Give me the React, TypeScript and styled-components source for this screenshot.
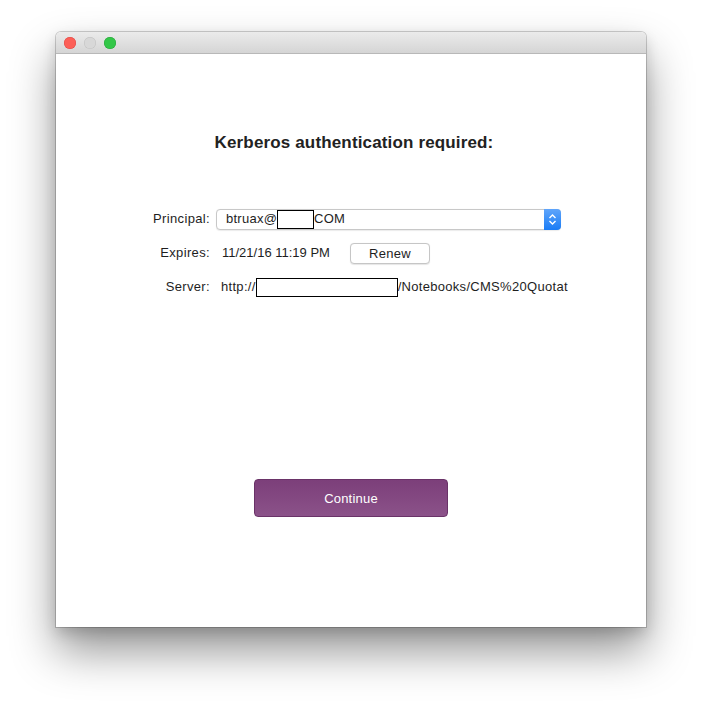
import React from "react";
import styled, { createGlobalStyle } from "styled-components";

const Global = createGlobalStyle`
  html, body { margin: 0; padding: 0; background: #ffffff; }
  body { font-family: "Liberation Sans", Arial, sans-serif; }
`;

const Page = styled.div`
  width: 702px;
  height: 707px;
  padding: 32px 0 0 56px;
  box-sizing: border-box;
  overflow: hidden;
`;

const Window = styled.div`
  width: 590px;
  height: 595px;
  background: #fff;
  border-radius: 5px 5px 0 0;
  box-shadow: 0 0 0 1px rgba(0,0,0,0.18), 0 24px 45px rgba(0,0,0,0.42), 0 6px 14px rgba(0,0,0,0.15);
  display: flex;
  flex-direction: column;
`;

const TitleBar = styled.div`
  height: 22px;
  flex: none;
  border-radius: 5px 5px 0 0;
  background: linear-gradient(#ebebeb, #d5d5d5);
  border-bottom: 1px solid #b8b8b8;
  box-sizing: border-box;
  display: flex;
  align-items: center;
  gap: 8px;
  padding-left: 8px;
`;

const Light = styled.span<{ $c: string; $b: string }>`
  width: 12px;
  height: 12px;
  border-radius: 50%;
  background: ${(p) => p.$c};
  box-shadow: inset 0 0 0 0.5px ${(p) => p.$b};
`;

const Body = styled.div`
  flex: 1;
  display: flex;
  flex-direction: column;
  align-items: stretch;
`;

const Title = styled.h1`
  margin: 79px 0 0 0;
  padding-left: 6px;
  font-size: 17px;
  font-weight: bold;
  color: #222;
  text-align: center;
  line-height: 20px;
  letter-spacing: 0.15px;
`;

const Form = styled.div`
  margin: 55px 0 0 90px;
  display: grid;
  grid-template-columns: 64px auto;
  column-gap: 6px;
  row-gap: 12px;
  align-items: center;
  font-size: 13px;
  color: #1e1e1e;
`;

const Label = styled.div`
  text-align: right;
  line-height: 22px;
  letter-spacing: 0.35px;
  white-space: nowrap;
`;

const Value = styled.div<{ $indent?: number; $ls?: number }>`
  display: flex;
  align-items: center;
  padding-left: ${(p) => p.$indent ?? 0}px;
  line-height: 22px;
  white-space: nowrap;
  letter-spacing: ${(p) => p.$ls ?? 0}px;
`;

const Popup = styled.div`
  width: 345px;
  height: 21px;
  box-sizing: border-box;
  border: 1px solid #c8c8c8;
  border-radius: 4px;
  background: #fff;
  display: flex;
  align-items: center;
  padding-left: 9px;
  position: relative;
  box-shadow: 0 0.5px 1px rgba(0,0,0,0.08);
`;

const Stepper = styled.div`
  position: absolute;
  right: -1px;
  top: -1px;
  width: 17px;
  height: 21px;
  border-radius: 0 4px 4px 0;
  background: linear-gradient(#5fa5fb, #1a7cf5);
  display: flex;
  align-items: center;
  justify-content: center;
`;

const Redact = styled.span<{ $w: number }>`
  display: inline-block;
  width: ${(p) => p.$w}px;
  height: 19px;
  box-sizing: border-box;
  border: 1px solid #000;
  background: #fff;
`;

const Button = styled.button`
  margin-left: 20px;
  width: 80px;
  height: 21px;
  box-sizing: border-box;
  border: 1px solid #c6c6c6;
  border-radius: 4px;
  background: #fff;
  font-family: inherit;
  font-size: 13px;
  letter-spacing: 0.3px;
  color: #1e1e1e;
  padding: 0;
  box-shadow: 0 0.5px 1px rgba(0,0,0,0.1);
`;

const Continue = styled.button`
  margin: 181px 0 0 198px;
  width: 194px;
  height: 38px;
  border: 1px solid #6a3368;
  border-radius: 4px;
  background: linear-gradient(#7c3f7a, #8b5289);
  color: #fff;
  font-family: inherit;
  font-size: 13px;
  letter-spacing: 0.2px;
  padding: 0;
`;

export default function App() {
  return (
    <>
      <Global />
      <Page>
        <Window>
          <TitleBar>
            <Light $c="#fc5f57" $b="#df4744" />
            <Light $c="#d8d8d8" $b="#c0c0c0" />
            <Light $c="#33c748" $b="#27a33a" />
          </TitleBar>
          <Body>
            <Title>Kerberos authentication required:</Title>
            <Form>
              <Label>Principal:</Label>
              <Value $ls={0.25}>
                <Popup>
                  btruax@<Redact $w={37} />COM
                  <Stepper>
                    <svg width="9" height="13" viewBox="0 0 9 13">
                      <path d="M1.5 5 L4.5 2 L7.5 5 M1.5 8 L4.5 11 L7.5 8" fill="none" stroke="#fff" strokeWidth="1.4" />
                    </svg>
                  </Stepper>
                </Popup>
              </Value>
              <Label>Expires:</Label>
              <Value $indent={6}>
                11/21/16 11:19 PM
                <Button>Renew</Button>
              </Value>
              <Label>Server:</Label>
              <Value $indent={5} $ls={0.3}>
                http://<Redact $w={142} />/Notebooks/CMS%20Quotat
              </Value>
            </Form>
            <Continue>Continue</Continue>
          </Body>
        </Window>
      </Page>
    </>
  );
}
